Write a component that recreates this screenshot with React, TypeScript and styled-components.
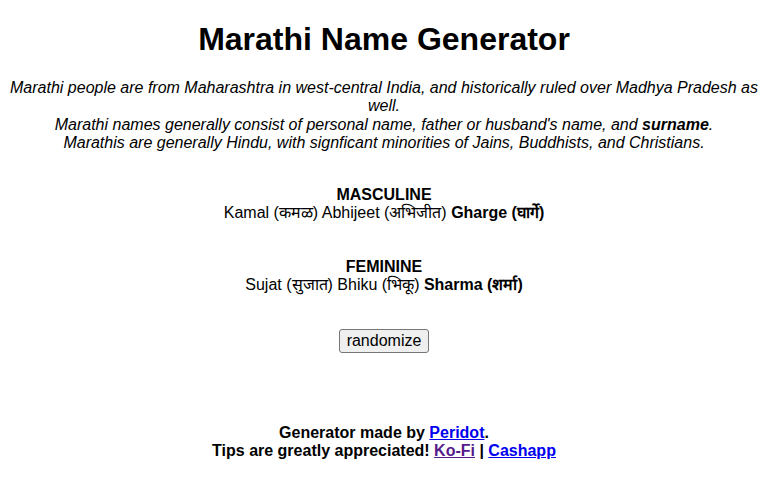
import React from 'react'
import styled, { createGlobalStyle } from 'styled-components'

const GlobalStyle = createGlobalStyle`
  html, body {
    margin: 0;
    padding: 0;
    background: #ffffff;
  }
  body {
    font-family: "Liberation Sans", Arial, sans-serif;
    font-size: 16px;
    color: #000000;
  }
`

const Page = styled.div`
  padding: 21px 8px 0;
  display: flex;
  flex-direction: column;
  align-items: center;
  text-align: center;
`

const Title = styled.h1`
  margin: 0;
  font-size: 32px;
  line-height: 37px;
  font-weight: bold;
`

const Intro = styled.p`
  margin: 21px 0 0;
  font-style: italic;
  line-height: 18.4px;
`

const Section = styled.div<{ $gap: number }>`
  margin-top: ${p => p.$gap}px;
  line-height: 18px;
`

const Heading = styled.div`
  font-weight: bold;
`

const Surname = styled.b`
  font-weight: bold;
`

const RandomButton = styled.button`
  margin-top: 35px;
  font-family: "Liberation Sans", Arial, sans-serif;
  font-size: 16px;
  line-height: 18px;
  padding: 2px 7px;
  color: #000000;
  background: #efefef;
  border: 1px solid #767676;
  border-radius: 3px;
`

const Footer = styled.div`
  margin-top: 71px;
  font-weight: bold;
  line-height: 18px;
`

const Link = styled.a<{ $visited?: boolean }>`
  color: ${p => (p.$visited ? '#551a8b' : '#0000ee')};
  text-decoration: underline;
`

type Gender = {
  label: string
  first: string
  middle: string
  last: string
  gap: number
}

const rows: Gender[] = [
  { label: 'MASCULINE', first: 'Kamal (कमळ)', middle: 'Abhijeet (अभिजीत)', last: 'Gharge (घार्गे)', gap: 33 },
  { label: 'FEMININE', first: 'Sujat (सुजात)', middle: 'Bhiku (भिकू)', last: 'Sharma (शर्मा)', gap: 36 },
]

export default function App() {
  return (
    <Page>
      <GlobalStyle />
      <Title>Marathi Name Generator</Title>
      <Intro>
        Marathi people are from Maharashtra in west-central India, and historically ruled over Madhya Pradesh as well.
        <br />
        Marathi names generally consist of personal name, father or husband's name, and <b>surname</b>.
        <br />
        Marathis are generally Hindu, with signficant minorities of Jains, Buddhists, and Christians.
      </Intro>
      {rows.map(r => (
        <Section key={r.label} $gap={r.gap}>
          <Heading>{r.label}</Heading>
          <div>
            {r.first} {r.middle} <Surname>{r.last}</Surname>
          </div>
        </Section>
      ))}
      <RandomButton>randomize</RandomButton>
      <Footer>
        Generator made by <Link href="#">Peridot</Link>.
        <br />
        Tips are greatly appreciated! <Link href="#" $visited>Ko-Fi</Link> | <Link href="#">Cashapp</Link>
      </Footer>
    </Page>
  )
}
